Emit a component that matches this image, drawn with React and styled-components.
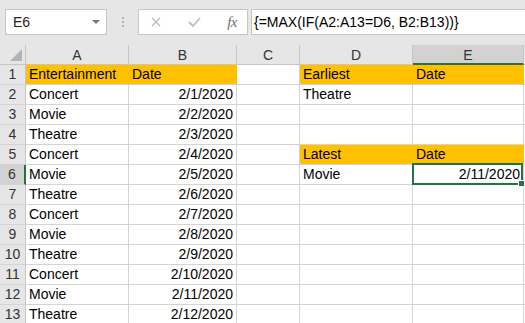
import React from "react";
import styled, { createGlobalStyle, css } from "styled-components";

const colors = {
  chrome: "#e6e6e6",
  selHead: "#d2d2d2",
  grid: "#d4d4d4",
  headLine: "#c6c6c6",
  green: "#217346",
  gold: "#ffc000",
  text: "#000000"
};

const GlobalStyle = createGlobalStyle`
  body {
    margin: 0;
    background: #ffffff;
    font-family: "Liberation Sans", Arial, sans-serif;
    overflow: hidden;
  }
`;

const Page = styled.div`
  width: 525px;
  height: 323px;
  overflow: hidden;
`;

const Toolbar = styled.div`
  display: flex;
  align-items: flex-start;
  height: 45px;
  padding-top: 9px;
  box-sizing: border-box;
  background: ${colors.chrome};
`;

const Box = styled.div`
  display: flex;
  align-items: center;
  height: 26px;
  box-sizing: border-box;
  background: #ffffff;
  border: 1px solid ${colors.headLine};
`;

const NameBox = styled(Box)`
  margin-left: 5px;
  width: 102px;
  padding: 0 6px 0 7px;
  justify-content: space-between;
  font-size: 14px;
  color: #222;
`;

const Caret = styled.span`
  width: 0;
  height: 0;
  border-left: 4px solid transparent;
  border-right: 4px solid transparent;
  border-top: 4px solid #777;
`;

const Grip = styled.div`
  display: flex;
  flex-direction: column;
  gap: 2px;
  width: 31px;
  align-items: center;
  padding-top: 8px;

  span {
    width: 2px;
    height: 2px;
    background: #b4b4b4;
  }
`;

const ButtonsBox = styled(Box)`
  width: 110px;
  padding: 0 10px 0 12px;
  justify-content: space-between;
`;

const Fx = styled.span`
  font-family: "Liberation Serif", "Times New Roman", serif;
  font-style: italic;
  font-size: 15px;
  color: #6f6f6f;
  letter-spacing: -0.5px;
`;

const FormulaBox = styled(Box)`
  flex: 1;
  margin-left: 3px;
  padding-left: 2px;
  border-right: none;
  font-size: 14px;
  color: ${colors.text};
  white-space: nowrap;
`;

const Sheet = styled.div`
  display: grid;
  grid-template-columns: 26px 103px 108px 63px 113px 111px 1fr;
  grid-auto-rows: 20px;
`;

const Corner = styled.div`
  position: relative;
  background: ${colors.chrome};
  border-right: 1px solid ${colors.headLine};
  border-bottom: 1px solid ${colors.headLine};
  box-sizing: border-box;
  display: flex;
  align-items: flex-end;
  justify-content: flex-end;
  padding: 0 3px 3px 0;
`;

const ColHead = styled.div`
  display: flex;
  align-items: center;
  justify-content: center;
  box-sizing: border-box;
  font-size: 14px;
  color: #333;
  background: ${p => (p.$active ? colors.selHead : colors.chrome)};
  border-right: 1px solid ${colors.headLine};
  border-bottom: ${p =>
    p.$active ? `2px solid ${colors.green}` : `1px solid ${colors.headLine}`};
  padding-top: ${p => (p.$active ? "1px" : "0")};
`;

const RowHead = styled.div`
  display: flex;
  align-items: flex-end;
  justify-content: center;
  padding-bottom: 2px;
  box-sizing: border-box;
  font-size: 14px;
  color: #333;
  background: ${p => (p.$active ? colors.selHead : colors.chrome)};
  border-bottom: 1px solid ${colors.grid};
  border-right: ${p =>
    p.$active ? `2px solid ${colors.green}` : `1px solid ${colors.headLine}`};
`;

const Cell = styled.div`
  position: relative;
  display: flex;
  align-items: flex-end;
  justify-content: ${p => (p.$right ? "flex-end" : "flex-start")};
  padding: 0 3px 2px 3px;
  box-sizing: border-box;
  font-size: 14px;
  color: ${colors.text};
  white-space: nowrap;
  background: ${p => (p.$fill ? colors.gold : "#ffffff")};
  border-right: 1px solid ${p => (p.$fill ? colors.gold : colors.grid)};
  border-bottom: 1px solid ${colors.grid};

  ${p =>
    p.$selected &&
    css`
      &::after {
        content: "";
        position: absolute;
        top: -2px;
        left: -1px;
        right: 0;
        bottom: -1px;
        border: 2px solid ${colors.green};
      }
      &::before {
        content: "";
        position: absolute;
        right: -2px;
        bottom: -3px;
        width: 5px;
        height: 5px;
        background: ${colors.green};
        border: 1px solid #ffffff;
        z-index: 1;
      }
    `}
`;

const Tail = styled.div`
  border-bottom: 1px solid ${colors.grid};
  background: ${p => (p.$head ? colors.chrome : "#ffffff")};
  border-bottom-color: ${p => (p.$head ? colors.headLine : colors.grid)};
`;

const entertainment = [
  "Concert",
  "Movie",
  "Theatre",
  "Concert",
  "Movie",
  "Theatre",
  "Concert",
  "Movie",
  "Theatre",
  "Concert",
  "Movie",
  "Theatre"
];

// column D / E contents, keyed by row number
const side = {
  1: { d: "Earliest", e: "Date", fill: true },
  2: { d: "Theatre" },
  5: { d: "Latest", e: "Date", fill: true },
  6: { d: "Movie", e: "2/11/2020", selected: true }
};

const CornerMark = () => (
  <svg width="12" height="12" viewBox="0 0 12 12">
    <polygon points="12,0 12,12 0,12" fill="#b4b4b4" />
  </svg>
);

const CrossIcon = () => (
  <svg width="10" height="10" viewBox="0 0 10 10">
    <path d="M1 1 L9 9 M9 1 L1 9" stroke="#bdbdbd" strokeWidth="1.4" />
  </svg>
);

const CheckIcon = () => (
  <svg width="13" height="10" viewBox="0 0 13 10">
    <path d="M1 5 L5 9 L12 1" stroke="#bdbdbd" strokeWidth="1.8" fill="none" />
  </svg>
);

export default function App() {
  const rows = [];
  for (let r = 1; r <= 13; r++) {
    const s = side[r] || {};
    const first = r === 1;
    rows.push(
      <React.Fragment key={r}>
        <RowHead $active={r === 6}>{r}</RowHead>
        <Cell $fill={first}>{first ? "Entertainment" : entertainment[r - 2]}</Cell>
        <Cell $fill={first} $right={!first}>
          {first ? "Date" : `2/${r - 1}/2020`}
        </Cell>
        <Cell />
        <Cell $fill={s.fill}>{s.d}</Cell>
        <Cell $fill={s.fill} $right={!s.fill} $selected={s.selected}>
          {s.e}
        </Cell>
        <Tail />
      </React.Fragment>
    );
  }

  return (
    <Page>
      <GlobalStyle />
      <Toolbar>
        <NameBox>
          E6
          <Caret />
        </NameBox>
        <Grip>
          <span />
          <span />
          <span />
        </Grip>
        <ButtonsBox>
          <CrossIcon />
          <CheckIcon />
          <Fx>fx</Fx>
        </ButtonsBox>
        <FormulaBox>{"{=MAX(IF(A2:A13=D6, B2:B13))}"}</FormulaBox>
      </Toolbar>
      <Sheet>
        <Corner>
          <CornerMark />
        </Corner>
        {["A", "B", "C", "D", "E"].map(c => (
          <ColHead key={c} $active={c === "E"}>
            {c}
          </ColHead>
        ))}
        <Tail $head />
        {rows}
      </Sheet>
    </Page>
  );
}
